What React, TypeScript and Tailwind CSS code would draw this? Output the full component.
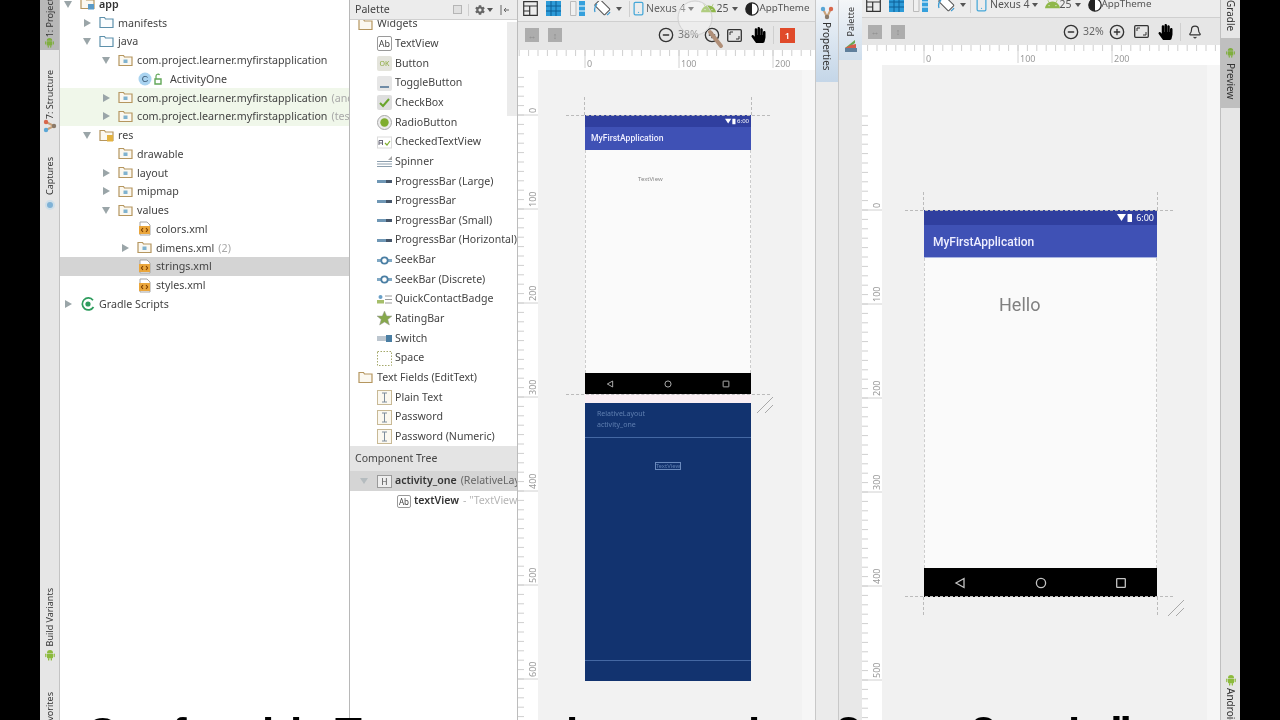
import { CircleMinus, CirclePlus, Bell, Smartphone } from "lucide-react";
import { FaAndroid, FaCog, FaHandPaper } from "react-icons/fa";

type Row = { label: string; depth: number; arrow?: "open" | "closed"; icon: string; bold?: boolean; suffix?: string; bg?: string };

const treeRows: Row[] = [
  { label: "app", depth: 0, arrow: "open", icon: "module", bold: true },
  { label: "manifests", depth: 1, arrow: "closed", icon: "blue" },
  { label: "java", depth: 1, arrow: "open", icon: "blue" },
  { label: "com.project.learner.myfirstapplication", depth: 2, arrow: "open", icon: "pkg" },
  { label: "ActivityOne", depth: 3, icon: "class" },
  { label: "com.project.learner.myfirstapplication", depth: 2, arrow: "closed", icon: "pkg", suffix: "(androidTest)", bg: "bg-[#f0f7ea]" },
  { label: "com.project.learner.myfirstapplication", depth: 2, arrow: "closed", icon: "pkg", suffix: "(test)", bg: "bg-[#f0f7ea]" },
  { label: "res", depth: 1, arrow: "open", icon: "res" },
  { label: "drawable", depth: 2, icon: "pkg" },
  { label: "layout", depth: 2, arrow: "closed", icon: "pkg" },
  { label: "mipmap", depth: 2, arrow: "closed", icon: "pkg" },
  { label: "values", depth: 2, arrow: "open", icon: "pkg" },
  { label: "colors.xml", depth: 3, icon: "xml" },
  { label: "dimens.xml", depth: 3, arrow: "closed", icon: "pkg", suffix: "(2)" },
  { label: "strings.xml", depth: 3, icon: "xml", bg: "bg-[#d4d4d4]" },
  { label: "styles.xml", depth: 3, icon: "xml" },
  { label: "Gradle Scripts", depth: 0, arrow: "closed", icon: "gradle" },
];

const indent = ["pl-0", "pl-[19px]", "pl-[38px]", "pl-[57px]"];

const paletteRows = [
  { label: "Widgets", icon: "folder" },
  { label: "TextView", icon: "ab" },
  { label: "Button", icon: "ok" },
  { label: "ToggleButton", icon: "toggle" },
  { label: "CheckBox", icon: "check" },
  { label: "RadioButton", icon: "radio" },
  { label: "CheckedTextView", icon: "checked" },
  { label: "Spinner", icon: "spinner" },
  { label: "ProgressBar (Large)", icon: "bar" },
  { label: "ProgressBar", icon: "bar" },
  { label: "ProgressBar (Small)", icon: "bar" },
  { label: "ProgressBar (Horizontal)", icon: "bar" },
  { label: "SeekBar", icon: "seek" },
  { label: "SeekBar (Discrete)", icon: "seek" },
  { label: "QuickContactBadge", icon: "badge" },
  { label: "RatingBar", icon: "star" },
  { label: "Switch", icon: "switch" },
  { label: "Space", icon: "space" },
  { label: "Text Fields (EditText)", icon: "folder" },
  { label: "Plain Text", icon: "field" },
  { label: "Password", icon: "field" },
  { label: "Password (Numeric)", icon: "field" },
];

const caption = [
  { t: "C", c: "left-[86px] top-[712px]" },
  { t: "f", c: "left-[172px] top-[712px]" },
  { t: "i", c: "left-[262px] top-[712px]" },
  { t: "l", c: "left-[290px] top-[712px]" },
  { t: "T", c: "left-[335px] top-[712px]" },
  { t: "l", c: "left-[566px] top-[712px]" },
  { t: "l", c: "left-[748px] top-[712px]" },
  { t: "o", c: "left-[835px] top-[704px]" },
  { t: "o", c: "left-[970px] top-[704px]" },
  { t: "l", c: "left-[1068px] top-[712px]" },
  { t: "”", c: "left-[1110px] top-[710px]" },
];

function Arrow({ dir }: { dir?: "open" | "closed" }) {
  if (!dir) return <span className="w-4 shrink-0" />;
  return (
    <svg className="w-4 h-3 shrink-0" viewBox="0 0 16 12">
      {dir === "open" ? <path d="M4 3h8l-4 7z" fill="#9aa5a8" /> : <path d="M5 2l7 4-7 4z" fill="#9aa5a8" />}
    </svg>
  );
}

function AndroidBot({ className }: { className: string }) {
  return (
    <svg viewBox="0 0 12 12" className={className}>
      <path d="M3 4a3 3 0 0 1 6 0z" fill="currentColor" />
      <rect x="3" y="4.6" width="6" height="4.6" rx=".6" fill="currentColor" />
      <rect x="1.2" y="4.6" width="1.2" height="3.6" rx=".6" fill="currentColor" />
      <rect x="9.6" y="4.6" width="1.2" height="3.6" rx=".6" fill="currentColor" />
      <rect x="4" y="9" width="1.3" height="2.6" rx=".6" fill="currentColor" />
      <rect x="6.7" y="9" width="1.3" height="2.6" rx=".6" fill="currentColor" />
    </svg>
  );
}

function TreeIcon({ kind }: { kind: string }) {
  if (kind === "class")
    return (
      <svg viewBox="0 0 28 14" className="w-[28px] h-[14px] shrink-0 translate-x-[7px]">
        <circle cx="7" cy="7" r="6.5" fill="#a9d3f0" />
        <text x="7" y="10" fontSize="9" textAnchor="middle" fill="#34536e" fontFamily="Liberation Sans">C</text>
        <path d="M17 7h6v5h-6z" fill="none" stroke="#62a758" strokeWidth="1.4" />
        <path d="M18 7V4a2 2 0 0 1 3.6-1" fill="none" stroke="#62a758" strokeWidth="1.2" />
      </svg>
    );
  if (kind === "xml")
    return (
      <svg viewBox="0 0 14 15" className="w-[14px] h-[15px] shrink-0">
        <path d="M2 1h7l3 3v10H2z" fill="#fff" stroke="#a3a3a3" />
        <rect x="1" y="5" width="11" height="8" fill="#eaa63c" />
        <path d="M5 7L3.4 9 5 11M8 7l1.6 2L8 11" stroke="#7a3d00" fill="none" strokeWidth="1.1" />
      </svg>
    );
  if (kind === "gradle")
    return (
      <svg viewBox="0 0 14 14" className="w-[14px] h-[14px] shrink-0">
        <path d="M12 3.2A6 6 0 1 0 12.5 10" fill="none" stroke="#2e9c5d" strokeWidth="1.7" />
        <circle cx="7" cy="7" r="2.6" fill="#2e9c5d" />
      </svg>
    );
  const stroke = kind === "blue" ? "#5d90ab" : "#b5965f";
  return (
    <svg viewBox="0 0 15 13" className="w-[15px] h-[13px] shrink-0">
      <path d="M1 11.5V1.5h4.5l1 1.5h7.5v8.5z" fill={kind === "blue" ? "#fbfdfe" : "#fbf8f0"} stroke={stroke} strokeWidth="1.2" />
      {kind === "pkg" && <rect x="5.5" y="5.5" width="4" height="3.5" fill="#7fb2cf" />}
      {kind === "module" && <rect x="8" y="7" width="6" height="5.5" fill="#5b9bc8" />}
      {kind === "res" && <rect x="8" y="6" width="6" height="6.5" fill="#e3b23f" />}
    </svg>
  );
}

function PaletteIcon({ kind }: { kind: string }) {
  const cls = "w-[15px] h-[15px] shrink-0";
  switch (kind) {
    case "folder":
      return (
        <svg viewBox="0 0 15 13" className="w-[15px] h-[13px] shrink-0">
          <path d="M1 11.5V1.5h4.5l1 1.5h7.5v8.5z" fill="#fbf8f0" stroke="#b5965f" strokeWidth="1.2" />
        </svg>
      );
    case "ab":
      return (
        <span className="w-[15px] h-[15px] shrink-0 border border-[#9a9a9a] rounded-[2px] text-[9px] leading-[13px] text-center text-[#444]">Ab</span>
      );
    case "ok":
      return <span className="w-[15px] h-[15px] shrink-0 bg-[#e4e4dc] rounded-[2px] text-[7px] leading-[15px] text-center text-[#8aa83c]">OK</span>;
    case "toggle":
      return (
        <svg viewBox="0 0 15 15" className={cls}>
          <rect width="15" height="15" rx="2" fill="#e6e6e6" />
          <rect x="3" y="10" width="9" height="2" fill="#6f8ba6" />
        </svg>
      );
    case "check":
      return (
        <svg viewBox="0 0 15 15" className={cls}>
          <rect width="15" height="15" rx="2" fill="#dedede" />
          <path d="M3 8l3 3 6-7" fill="none" stroke="#6aa52c" strokeWidth="2" />
        </svg>
      );
    case "radio":
      return (
        <svg viewBox="0 0 15 15" className={cls}>
          <circle cx="7.5" cy="7.5" r="7" fill="#ececec" stroke="#a8a8a8" />
          <circle cx="7.5" cy="7.5" r="4.2" fill="#7fad2e" />
        </svg>
      );
    case "checked":
      return (
        <svg viewBox="0 0 15 15" className={cls}>
          <rect x=".5" y="2" width="14" height="11" fill="#fff" stroke="#dcdcdc" />
          <path d="M2 10V5.5h4M2 8h3.5M5.5 5.5V10" fill="none" stroke="#667" />
          <path d="M8 8l2 2 3-4" fill="none" stroke="#7fad2e" strokeWidth="1.2" />
        </svg>
      );
    case "spinner":
      return (
        <svg viewBox="0 0 15 15" className={cls}>
          <path d="M0 7.5h15M0 10h15M0 12.5h15" stroke="#8d9fae" />
          <path d="M15 2v4h-4z" fill="#a5a5a5" />
        </svg>
      );
    case "bar":
      return (
        <svg viewBox="0 0 15 15" className={cls}>
          <rect y="6" width="9" height="3" fill="#6f97b5" />
          <rect x="9" y="6" width="6" height="3" fill="#46566a" />
        </svg>
      );
    case "seek":
      return (
        <svg viewBox="0 0 15 15" className={cls}>
          <rect y="6" width="15" height="3" fill="#7fa8c4" />
          <circle cx="7.5" cy="7.5" r="3.2" fill="#fff" stroke="#4a7ea3" strokeWidth="1.8" />
        </svg>
      );
    case "badge":
      return (
        <svg viewBox="0 0 15 15" className={cls}>
          <circle cx="3.5" cy="5" r="2" fill="#6aa0c7" />
          <rect x="0" y="8" width="7" height="3.5" fill="#a5be6a" />
          <path d="M8 4h7M8 7.5h7M8 11h7" stroke="#9a9a9a" />
        </svg>
      );
    case "star":
      return (
        <svg viewBox="0 0 15 15" className={cls}>
          <path d="M7.5 0l2.2 5h5.3l-4.2 3.5 1.6 5.5-4.9-3-4.9 3 1.6-5.5L0 5h5.3z" fill="#86a84c" stroke="#9a9a9a" strokeWidth=".5" />
        </svg>
      );
    case "switch":
      return (
        <svg viewBox="0 0 15 15" className={cls}>
          <rect y="5" width="15" height="5" fill="#bcc6cf" />
          <rect x="9" y="4" width="6" height="7" fill="#4a7ea3" />
        </svg>
      );
    case "space":
      return (
        <svg viewBox="0 0 15 15" className={cls}>
          <rect x=".5" y=".5" width="14" height="14" fill="none" stroke="#a4a86a" strokeDasharray="1.5 1.5" />
        </svg>
      );
    default:
      return (
        <svg viewBox="0 0 15 15" className={cls}>
          <rect x=".5" y=".5" width="14" height="14" fill="#fbf8f0" stroke="#c8b995" />
          <path d="M5 3h5M5 12h5M7.5 3v9" stroke="#7d8c9c" />
        </svg>
      );
  }
}

function SideLabel({ text, className }: { text: string; className?: string }) {
  return (
    <span className={`[writing-mode:vertical-rl] rotate-180 text-[9px] leading-[20px] text-[#333] whitespace-nowrap shrink-0 ${className ?? ""}`}>{text}</span>
  );
}

function NetworkIcon() {
  return (
    <svg viewBox="0 0 14 14" className="w-[14px] h-[14px] shrink-0">
      <path d="M3 3l4 8 4-8" fill="none" stroke="#c9a27a" strokeWidth="2" />
      <circle cx="3" cy="3" r="2.2" fill="#5aa6d6" />
      <circle cx="11" cy="3" r="2.2" fill="#d8674c" />
      <circle cx="7" cy="11" r="2.2" fill="#8a7a6a" />
    </svg>
  );
}

function DesignToggles() {
  return (
    <>
      <svg viewBox="0 0 15 15" className="w-[15px] h-[15px] shrink-0">
        <path d="M.7.7h13.6v13.6H.7zM.7 5h13.6M.7 10h6M6.7 5v9.3" fill="none" stroke="#333" strokeWidth="1.2" />
      </svg>
      <svg viewBox="0 0 15 15" className="w-[15px] h-[15px] ml-[8px] shrink-0">
        <rect width="15" height="15" fill="#2d9bd8" />
        <path d="M5 0v15M10 0v15M0 5h15M0 10h15" stroke="#0d5f96" />
      </svg>
      <svg viewBox="0 0 15 15" className="w-[15px] h-[15px] ml-[9px] shrink-0">
        <path d="M.5.5h5.5v14H.5z" fill="#f0f0f0" stroke="#bbb" />
        <rect x="9" width="6" height="15" fill="#35a0dc" />
        <path d="M9 5h6M9 10h6" stroke="#fff" />
      </svg>
    </>
  );
}

function Rotate() {
  return (
    <svg viewBox="0 0 22 15" className="w-[22px] h-[15px] block">
      <rect x="6" y="-1" width="8" height="14" rx="1" transform="rotate(-45 10 7)" fill="#fff" stroke="#555" />
      <path d="M2 11a8 8 0 0 1 2-8M14 14a8 8 0 0 0 3-3" fill="none" stroke="#3d9bd2" strokeWidth="1.3" />
    </svg>
  );
}

function Caret() {
  return (
    <svg viewBox="0 0 6 4" className="w-[6px] h-[4px] block">
      <path d="M0 0h6L3 4z" fill="#555" />
    </svg>
  );
}

function Theme() {
  return (
    <svg viewBox="0 0 14 14" className="w-[14px] h-[14px] block">
      <circle cx="7" cy="7" r="6.2" fill="#fff" stroke="#222" strokeWidth="1.2" />
      <path d="M7 .8a6.2 6.2 0 0 0 0 12.4z" fill="#222" />
    </svg>
  );
}

function Fit() {
  return (
    <svg viewBox="0 0 15 13" className="w-[15px] h-[13px] block">
      <rect x=".7" y=".7" width="13.6" height="11.6" rx="1" fill="none" stroke="#333" strokeWidth="1.3" />
      <path d="M3 6V3h3M12 7v3H9" fill="none" stroke="#333" />
    </svg>
  );
}

function GrayBtn({ v }: { v?: boolean }) {
  return (
    <span className="w-[14px] h-[14px] bg-[#adadad] flex items-center justify-center text-[#8e8e8e] text-[9px] leading-none">
      {v ? "↕" : "↔"}
    </span>
  );
}

function Ruler({ width, zero, labels }: { width: number; zero: number; labels: number[] }) {
  const ticks = Array.from({ length: 60 }, (_, i) => zero - 94 + i * 9.4).filter((x) => x > 0 && x < width);
  return (
    <svg width={width} height="20" className="block shrink-0">
      {ticks.map((x, i) => (
        <line key={i} x1={x} x2={x} y1="0" y2="6" stroke="#cfcfcf" />
      ))}
      {labels.map((n, i) => (
        <g key={n}>
          <line x1={zero + i * 94} x2={zero + i * 94} y1="0" y2="18" stroke="#d0d0d0" />
          <text x={zero + i * 94 + 2} y="17" fontSize="9" fill="#9a9a9a" fontFamily="Noto Sans">{n}</text>
        </g>
      ))}
    </svg>
  );
}

function VRuler({ zero, labels, height }: { zero: number; labels: number[]; height: number }) {
  const ticks = Array.from({ length: 90 }, (_, i) => zero - 94 + i * 9.4).filter((y) => y > 0 && y < height);
  return (
    <svg width="20" height={height} className="block shrink-0">
      {ticks.map((y, i) => (
        <line key={i} x1="0" x2="6" y1={y} y2={y} stroke="#cfcfcf" />
      ))}
      {labels.map((n, i) => (
        <g key={n}>
          <line x1="0" x2="20" y1={zero + i * 94} y2={zero + i * 94} stroke="#d0d0d0" />
          <text
            transform={`translate(18 ${zero + i * 94 - 2}) rotate(-90)`}
            fontSize="9"
            fill="#9a9a9a"
            fontFamily="Noto Sans"
          >
            {n}
          </text>
        </g>
      ))}
    </svg>
  );
}

function ResizeMark({ className }: { className: string }) {
  return (
    <svg viewBox="0 0 18 18" className={`w-[18px] h-[18px] absolute ${className}`}>
      <path d="M1 17L17 1M9 17l8-8" stroke="#a8a8a8" />
    </svg>
  );
}

function NavGlyphs({ size }: { size: number }) {
  return (
    <>
      <svg width={size} height={size} viewBox="0 0 12 12">
        <path d="M10 1.5v9L2 6z" fill="none" stroke="#c4c4c4" strokeWidth="1.3" />
      </svg>
      <svg width={size} height={size} viewBox="0 0 12 12">
        <circle cx="6" cy="6" r="4.6" fill="none" stroke="#c4c4c4" strokeWidth="1.3" />
      </svg>
      <svg width={size} height={size} viewBox="0 0 12 12">
        <rect x="1.7" y="1.7" width="8.6" height="8.6" rx=".6" fill="none" stroke="#c4c4c4" strokeWidth="1.3" />
      </svg>
    </>
  );
}

function StatusIcons({ size }: { size: number }) {
  return (
    <svg width={size * 1.6} height={size} viewBox="0 0 16 10">
      <path d="M0 1h9L4.5 8z" fill="#fff" />
      <rect x="10.5" y="1" width="4.5" height="8" rx=".5" fill="#fff" />
    </svg>
  );
}

export default function App() {
  return (
    <div className="relative flex w-[1280px] h-[720px] overflow-hidden bg-black font-['Noto_Sans',sans-serif] text-[#444] blur-[0.4px]">
      <div className="w-10 shrink-0" />

      {/* left tool strip */}
      <div className="w-5 shrink-0 bg-[#e6e6e6] border-r border-[#c4c4c4] flex flex-col items-center overflow-hidden">
        <div className="w-full h-[50px] bg-[#b8b8b8] flex flex-col items-center justify-end pb-[2px] overflow-hidden shrink-0">
          <SideLabel text="1: Project" />
          <AndroidBot className="w-[11px] h-[11px] text-[#7fae3e] shrink-0" />
        </div>
        <SideLabel text="7: Structure" className="mt-[20px]" />
        <span className="shrink-0 -rotate-90"><NetworkIcon /></span>
        <SideLabel text="Captures" className="mt-[24px]" />
        <span className="mt-[5px] shrink-0 w-[10px] h-[10px] rounded-full bg-[#7fb2d6] border-2 border-[#cfdfe9]" />
        <SideLabel text="Build Variants" className="mt-[378px]" />
        <AndroidBot className="mt-[2px] w-[12px] h-[12px] text-[#8cba3c] shrink-0" />
        <SideLabel text="Favorites" className="mt-[31px]" />
      </div>

      {/* project tree */}
      <div className="w-[290px] shrink-0 bg-white border-r border-[#b8b8b8] overflow-hidden text-[10.7px]">
        <div className="-mt-[5.5px]">
          {treeRows.map((r, i) => (
            <div key={i} className={`flex items-center h-[18.75px] whitespace-nowrap ${indent[r.depth]} ${r.bg ?? ""}`}>
              <Arrow dir={r.arrow} />
              <span className="w-[23px] shrink-0 flex justify-center items-center">
                <TreeIcon kind={r.icon} />
              </span>
              <span className={r.icon === "class" ? "ml-[14px]" : ""}>
                <span className={r.bold ? "font-semibold text-[#333]" : ""}>{r.label}</span>
                {r.suffix && <span className="ml-1 text-[#a8a8a8]">{r.suffix}</span>}
              </span>
            </div>
          ))}
        </div>
      </div>

      {/* palette + component tree */}
      <div className="w-[168px] shrink-0 bg-white border-r border-[#bcbcbc] flex flex-col text-[10.6px] overflow-hidden">
        <div className="h-[20px] shrink-0 bg-[#ececec] border-b border-[#cfcfcf] flex items-center pl-[5px] pr-[7px] relative z-10 text-[#444]">
          <span>Palette</span>
          <span className="ml-auto w-[9px] h-[9px] border border-[#b5b5b5] bg-[#e0e0e0]" />
          <span className="ml-[6px] h-[12px] w-px bg-[#cfcfcf]" />
          <FaCog className="ml-[6px] w-[10px] h-[10px] text-[#666]" />
          <span className="ml-[2px]"><Caret /></span>
          <svg viewBox="0 0 10 10" className="ml-[7px] w-[10px] h-[10px]">
            <path d="M1 0v10M9 5H4M6 3L4 5l2 2" fill="none" stroke="#666" />
          </svg>
        </div>
        <div className="relative h-[426px] shrink-0 overflow-hidden">
          <div className="-mt-[5.5px]">
            {paletteRows.map((p) => (
              <div key={p.label} className={`flex items-center h-[19.65px] whitespace-nowrap ${p.icon === "folder" ? "pl-[8px] gap-[4px]" : "pl-[27px] gap-[3px]"}`}>
                <PaletteIcon kind={p.icon} />
                <span>{p.label}</span>
              </div>
            ))}
          </div>
          <span className="absolute right-0 top-[2px] w-[10px] h-[94px] bg-[#ebebeb]" />
        </div>
        <div className="h-[25px] shrink-0 bg-[#e4e4e4] flex items-center pl-[5px] text-[10.5px]">Component Tree</div>
        <div className="h-[20px] shrink-0 bg-[#d5d5d5] flex items-center pl-[9px] whitespace-nowrap">
          <svg viewBox="0 0 10 8" className="w-[10px] h-[8px] shrink-0">
            <path d="M1 1h8L5 7z" fill="#b5bcbf" />
          </svg>
          <span className="ml-[8px] w-[15px] h-[13px] shrink-0 border border-[#9a9a9a] bg-[#eee] text-[8px] leading-[11px] text-center">H</span>
          <span className="ml-[3px] shrink-0 font-semibold text-[#333]">activity_one</span>
          <span className="ml-1 shrink-0 text-[#666]">(RelativeLayout)</span>
        </div>
        <div className="h-[20px] shrink-0 flex items-center pl-[47px] whitespace-nowrap">
          <span className="w-[14px] h-[13px] shrink-0 border border-[#9a9a9a] rounded-[2px] text-[8px] leading-[11px] text-center">Ab</span>
          <span className="ml-[3px] shrink-0 font-semibold text-[#333]">textView</span>
          <span className="ml-1 shrink-0 text-[#b5b5b5]">- "TextView"</span>
        </div>
      </div>

      {/* design surface */}
      <div className="w-[297px] shrink-0 bg-white flex flex-col overflow-hidden text-[10.5px]">
        <div className="h-[22px] shrink-0 bg-[#ececec] border-b border-[#cfcfcf] pb-[4px] flex items-center pl-[5px] whitespace-nowrap [&>*]:shrink-0">
          <DesignToggles />
          <span className="ml-[8px]"><Rotate /></span>
          <span className="ml-[1px]"><Caret /></span>
          <span className="ml-[7px] w-px h-[16px] bg-[#cfcfcf]" />
          <Smartphone className="ml-[1px] w-[15px] h-[17px] text-[#45a7d8]" />
          <span className="text-[#666]">Nexus 4</span>
          <span className="ml-[2px]"><Caret /></span>
          <FaAndroid className="ml-[7px] w-[15px] h-[14px] text-[#8fb84a]" />
          <span className="ml-[1px] text-[#555]">25</span>
          <span className="ml-[3px]"><Caret /></span>
          <span className="ml-[7px]"><Theme /></span>
          <span className="ml-[1px] text-[9.8px] text-[#555]">AppTheme</span>
        </div>
        <div className="h-[28px] shrink-0 bg-[#e6e6e6] flex items-center pl-[7px] pb-[2px]">
          <GrayBtn />
          <span className="ml-[9px]"><GrayBtn v /></span>
          <CircleMinus className="ml-[96px] w-[16px] h-[16px] text-[#333]" />
          <span className="ml-[4px] text-[#777]">38%</span>
          <CirclePlus className="ml-[5px] w-[16px] h-[16px] text-[#333]" />
          <span className="ml-[7px]"><Fit /></span>
          <FaHandPaper className="ml-[9px] w-[15px] h-[16px] text-black" />
          <span className="ml-[7px] w-px h-[18px] bg-[#cfcfcf]" />
          <span className="ml-[6px] w-[15px] h-[15px] bg-[#e04a2a] text-white text-[9px] font-semibold leading-[15px] text-center">1</span>
        </div>
        <Ruler width={297} zero={67} labels={[0, 100, 200]} />
        <div className="flex flex-1 min-h-0">
          <VRuler zero={45} labels={[0, 100, 200, 300, 400, 500, 600]} height={650} />
          <div className="w-[264px] shrink-0 bg-[#f2f2f2] pl-[47px] pt-[45px]">
            <div className="relative w-[166px]">
              <span className="absolute -left-[1px] -top-[18px] h-[18px] border-l border-dashed border-[#bbb]" />
              <span className="absolute -right-[1px] -top-[18px] h-[18px] border-l border-dashed border-[#bbb]" />
              <span className="absolute -left-[19px] -right-[19px] top-0 border-t border-dashed border-[#bbb] z-10" />
              <div className="h-[12px] bg-[#303f9f] flex items-center justify-end gap-[1px] pr-[2px] text-[6px] text-white">
                <StatusIcons size={7} />
                <span>6:00</span>
              </div>
              <div className="h-[23px] bg-[#3f51b5] flex items-center pl-[6px] text-[8.6px] font-medium text-[#eef] font-['Roboto',sans-serif]">MyFirstApplication</div>
              <div className="h-[223px] bg-[#fafafa] border-x border-dashed border-[#ccc] pl-[52px] pt-[25px]">
                <span className="block text-[6px] text-[#888]">TextView</span>
              </div>
              <div className="h-[21px] bg-black flex items-center justify-between px-[21px]">
                <NavGlyphs size={8} />
              </div>
              <div className="relative h-[9px] bg-[#f9eef3]">
                <span className="absolute -left-[19px] -right-[19px] top-0 border-t border-dashed border-[#bbb]" />
                <ResizeMark className="left-[171px] top-[2px]" />
              </div>
              <div className="h-[278px] bg-[#12336f] flex flex-col text-[#5f7fb0]">
                <div className="h-[35px] border-b border-[#4468a3] pl-[12px] pt-[5px] text-[7px] leading-[11px]">
                  <div>RelativeLayout</div>
                  <div>activity_one</div>
                </div>
                <div className="flex justify-center pt-[24px] text-[6px]">
                  <span className="border border-[#6a8abd] leading-[6px] h-[8px]">TextView</span>
                </div>
                <div className="mt-auto h-[21px] border-t border-[#4468a3]" />
              </div>
            </div>
          </div>
          <div className="flex-1 bg-[#f6f6f6]" />
        </div>
      </div>

      {/* properties strip */}
      <div className="w-[23px] shrink-0 bg-[#ebebeb] border-l border-[#c8c8c8] flex flex-col">
        <div className="h-[82px] shrink-0 bg-gradient-to-b from-[#f2f5f8] to-[#c4d6e8] flex flex-col items-center pt-[6px] gap-[2px]">
          <NetworkIcon />
          <span className="[writing-mode:vertical-rl] text-[10px] leading-[20px] text-[#333]">Properties</span>
        </div>
      </div>

      {/* palette strip */}
      <div className="w-[24px] shrink-0 bg-[#e8e8e8] border-l border-[#c8c8c8] flex flex-col">
        <div className="h-[60px] shrink-0 bg-gradient-to-b from-[#f4f6f8] to-[#cfdeec] flex flex-col items-center pt-[7px] gap-[4px]">
          <SideLabel text="Palette" />
          <svg viewBox="0 0 13 12" className="w-[13px] h-[12px] shrink-0">
            <path d="M1 8L11 0v3L4 8z" fill="#6aa84f" />
            <path d="M1 8l6-3 5-1v4z" fill="#d85b4a" />
            <rect x="1" y="8" width="12" height="4" fill="#5f7f9c" />
          </svg>
        </div>
      </div>

      {/* preview panel */}
      <div className="w-[358px] shrink-0 bg-white flex flex-col overflow-hidden text-[10.5px]">
        <div className="-mt-[4px] h-[22px] shrink-0 bg-[#ececec] border-b border-[#cfcfcf] pb-[4px] flex items-center pl-[4px] whitespace-nowrap [&>*]:shrink-0">
          <DesignToggles />
          <span className="ml-[9px]"><Rotate /></span>
          <span className="ml-[1px]"><Caret /></span>
          <span className="ml-[4px] w-px h-[16px] bg-[#cfcfcf]" />
          <Smartphone className="ml-[3px] w-[15px] h-[17px] text-[#45a7d8]" />
          <span className="ml-[1px] text-[#555]">Nexus 4</span>
          <span className="ml-[2px]"><Caret /></span>
          <FaAndroid className="ml-[7px] w-[15px] h-[14px] text-[#8fb84a]" />
          <span className="text-[#555]">25</span>
          <span className="ml-[3px]"><Caret /></span>
          <span className="ml-[7px]"><Theme /></span>
          <span className="text-[9.8px] text-[#555]">AppTheme</span>
        </div>
        <div className="h-[27px] shrink-0 bg-[#e6e6e6] flex items-center pl-[6px]">
          <GrayBtn />
          <span className="ml-[9px]"><GrayBtn v /></span>
          <CircleMinus className="ml-[158px] w-[16px] h-[16px] text-[#333]" />
          <span className="ml-[4px] text-[#666]">32%</span>
          <CirclePlus className="ml-[5px] w-[16px] h-[16px] text-[#333]" />
          <span className="ml-[9px]"><Fit /></span>
          <FaHandPaper className="ml-[9px] w-[15px] h-[16px] text-black" />
          <span className="ml-[7px] w-px h-[18px] bg-[#cfcfcf]" />
          <Bell className="ml-[7px] w-[14px] h-[14px] text-[#333]" />
        </div>
        <Ruler width={358} zero={62} labels={[0, 100, 200]} />
        <div className="flex flex-1 min-h-0">
          <VRuler zero={145} labels={[0, 100, 200, 300, 400, 500]} height={655} />
          <div className="w-[325px] shrink-0 bg-[#f1f1f1] pl-[42px] pt-[145px]">
            <div className="relative w-[233px]">
              <span className="absolute -left-[1px] -top-[18px] h-[18px] border-l border-dashed border-[#bbb]" />
              <span className="absolute -right-[1px] -top-[18px] h-[18px] border-l border-dashed border-[#bbb]" />
              <span className="absolute -left-[19px] -right-[16px] top-0 border-t border-dashed border-[#bbb] z-10" />
              <div className="h-[15px] bg-[#303f9f] flex items-center justify-end gap-[3px] pr-[3px] text-[9px] text-white">
                <StatusIcons size={10} />
                <span>6:00</span>
              </div>
              <div className="h-[33px] bg-[#3f51b5] border-b border-[#a8b4e0] pt-[1px] flex items-center pl-[9px] text-[12px] font-medium text-[#eef] font-['Roboto',sans-serif]">MyFirstApplication</div>
              <div className="h-[310px] bg-[#fafafa] border-x border-dashed border-[#ccc] pl-[74px] pt-[35px]">
                <span className="block text-[18px] leading-[24px] text-[#808080] font-['Roboto',sans-serif]">Hello</span>
              </div>
              <div className="h-[29px] bg-black flex items-center justify-between px-[30px]">
                <NavGlyphs size={12} />
              </div>
              <span className="absolute -left-[19px] -right-[16px] bottom-0 border-t border-dashed border-[#bbb]" />
              <span className="absolute -left-[1px] -bottom-[18px] h-[18px] border-l border-dashed border-[#bbb]" />
              <span className="absolute -right-[1px] -bottom-[18px] h-[18px] border-l border-dashed border-[#bbb]" />
              <ResizeMark className="left-[243px] -bottom-[20px]" />
            </div>
          </div>
          <div className="flex-1 bg-[#f6f6f6]" />
        </div>
      </div>

      {/* right strip */}
      <div className="w-5 shrink-0 bg-[#e6e6e6] border-l border-[#c0c0c0] flex flex-col items-center overflow-hidden">
        <span className="[writing-mode:vertical-rl] text-[10px] leading-[18px] text-[#333] h-[36px] -mt-[6px] pt-[6px] shrink-0">Gradle</span>
        <div className="w-full h-[70px] mt-[8px] bg-[#bfbfbf] flex flex-col items-center pt-[9px] gap-[5px] shrink-0">
          <AndroidBot className="w-[11px] h-[11px] text-[#7fae3e] shrink-0" />
          <span className="[writing-mode:vertical-rl] text-[10px] leading-[18px] text-[#333]">Preview</span>
        </div>
        <div className="mt-auto -mb-[5px] flex flex-col items-center gap-[2px]">
          <AndroidBot className="w-[12px] h-[12px] text-[#8cba3c] shrink-0" />
          <span className="[writing-mode:vertical-rl] text-[10px] leading-[18px] text-[#333]">Android</span>
        </div>
      </div>

      <div className="w-10 shrink-0" />

      {/* magnifier cursor */}
      <svg viewBox="0 0 50 60" className="absolute left-[670px] top-[0px] w-[60px] h-[60px]">
        <circle cx="20" cy="18" r="17" fill="#ffffff" fillOpacity="0.3" stroke="#cfcfcf" strokeWidth="1" />
        <path d="M35 32l11 14" stroke="#b08f78" strokeWidth="4" strokeLinecap="round" />
      </svg>

      {/* burnt-in caption, only the tops of the letters show */}
      {caption.map((g, i) => (
        <span key={i} className={`absolute text-[44px] leading-[44px] font-bold text-black font-['Liberation_Sans',sans-serif] ${g.c}`}>{g.t}</span>
      ))}
    </div>
  );
}
